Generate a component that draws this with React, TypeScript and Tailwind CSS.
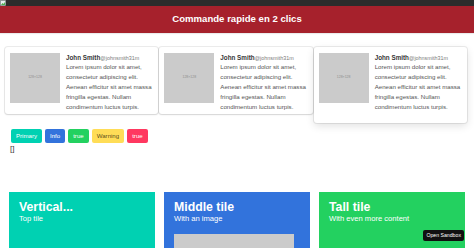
import React from "react";

const buttons = [
  { label: "Primary", cls: "bg-[#00d1b2] text-white" },
  { label: "Info", cls: "bg-[#3273dc] text-white" },
  { label: "true", cls: "bg-[#23d160] text-white" },
  { label: "Warning", cls: "bg-[#ffdd57] text-[rgba(0,0,0,0.7)]" },
  { label: "true", cls: "bg-[#ff3860] text-white" },
];

function Card({ tall = false }: { tall?: boolean }) {
  return (
    <div
      className={
        "bg-white rounded-[3px] flex gap-[6px] pl-[5px] pt-[6px] " +
        (tall
          ? "h-[76px] shadow-[0_3px_8px_rgba(10,10,10,0.12),0_0_0_1px_rgba(10,10,10,0.08)]"
          : "h-[67px] shadow-[0_1px_2px_rgba(10,10,10,0.1),0_0_0_1px_rgba(10,10,10,0.08)]")
      }
    >
      <div className="w-[50px] h-[50px] shrink-0 bg-[#cbcbcb] flex items-center justify-center text-[3.5px] text-[#8f8f8f]">
        128×128
      </div>
      <div className="text-[6.15px] leading-[10px] text-[#555] pt-px">
        <p className="leading-[7px]">
          <strong className="text-[#363636] text-[6.3px]">John Smith</strong>
          <small className="text-[5.4px] text-[#7a7a7a]">@johnsmith31m</small>
        </p>
        <p>
          Lorem ipsum dolor sit amet,
          <br />
          consectetur adipiscing elit.
          <br />
          Aenean efficitur sit amet massa
          <br />
          fringilla egestas. Nullam
          <br />
          condimentum luctus turpis.
        </p>
      </div>
    </div>
  );
}

export default function App() {
  return (
    <div className="relative w-[474px] h-[248px] overflow-hidden bg-white font-['Liberation_Sans',Arial,sans-serif]">
      {/* barre du haut */}
      <div className="h-[6px] bg-[#2c2c2c]">
        <svg width="6" height="6" viewBox="0 0 6 6">
          <rect x="0.5" y="0.5" width="5" height="5" fill="#e8eef0" stroke="#9aa" strokeWidth="0.5" />
          <path d="M1 5 L2.5 3 L3.5 4 L5 2 L5 5 Z" fill="#4caf50" />
        </svg>
      </div>

      {/* bandeau rouge */}
      <div className="h-[27px] bg-[#a6212c] flex items-center justify-center text-white font-bold text-[9.6px] shadow-[0_1px_1px_rgba(0,0,0,0.08)]">
        Commande rapide en 2 clics
      </div>

      {/* cartes */}
      <div className="grid grid-cols-3 gap-px items-start pt-[14px] pl-[5px] pr-[7px]">
        <Card />
        <Card />
        <Card tall />
      </div>

      {/* boutons */}
      <div className="flex gap-[3px] pl-[11px] pt-[6px]">
        {buttons.map((b, i) => (
          <button
            key={i}
            className={"h-[14px] px-[5px] rounded-[2px] text-[6.1px] leading-none " + b.cls}
          >
            {b.label}
          </button>
        ))}
      </div>
      <div className="pl-[10px] pt-[1px] text-[8px] leading-[10px] text-[#363636]">[]</div>

      {/* tuiles */}
      <div className="flex gap-[9px] pl-[9px] pt-[38px]">
        <div className="w-[146px] h-[90px] bg-[#00d1b2] text-white pl-[10px] pr-[16px] pt-[8px]">
          <p className="text-[12.3px] font-bold leading-[14px]">Vertical...</p>
          <p className="text-[7.6px] leading-[10px]">Top tile</p>
        </div>
        <div className="w-[146px] h-[90px] bg-[#3273dc] text-white pl-[10px] pr-[16px] pt-[8px]">
          <p className="text-[12.3px] font-bold leading-[14px]">Middle tile</p>
          <p className="text-[7.6px] leading-[10px]">With an image</p>
          <div className="mt-[10px] h-[60px] bg-[#cbcbcb]" />
        </div>
        <div className="w-[146px] h-[90px] bg-[#23d160] text-white pl-[10px] pr-[16px] pt-[8px]">
          <p className="text-[12.3px] font-bold leading-[14px]">Tall tile</p>
          <p className="text-[7.6px] leading-[10px]">With even more content</p>
        </div>
      </div>

      <div className="absolute right-[10px] bottom-[7px] bg-[#111] text-white text-[5.2px] leading-none px-[3px] py-[3px] rounded-[2px]">
        Open Sandbox
      </div>
    </div>
  );
}
